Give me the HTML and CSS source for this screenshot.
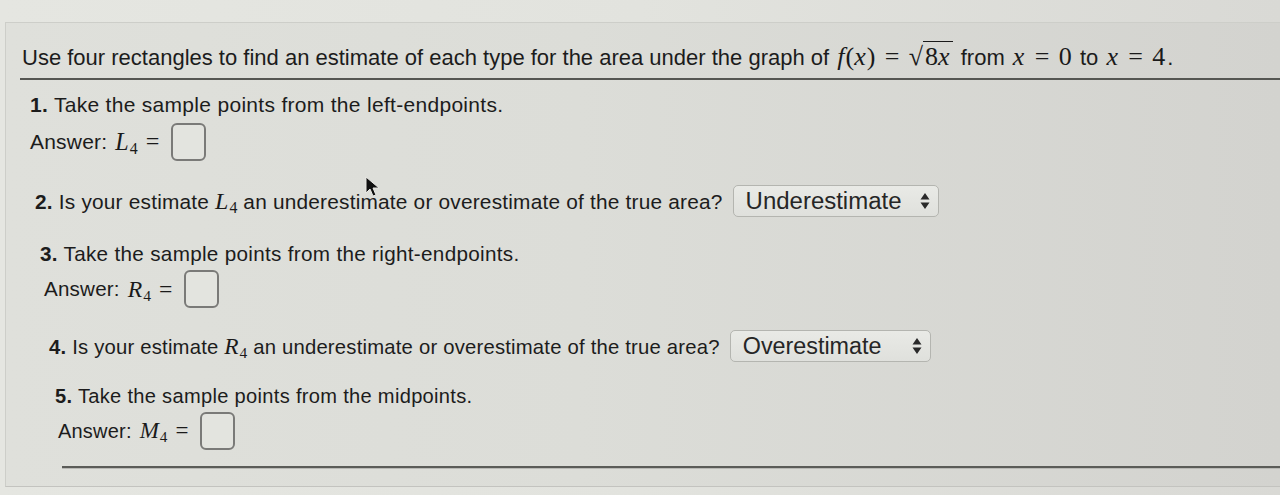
FILE: index.html
```html
<!DOCTYPE html>
<html>
<head>
<meta charset="utf-8">
<link rel="stylesheet" href="styles.css">
</head>
<body>
<div class="panel">
  <div class="header">
    <p class="intro">Use four rectangles to find an estimate of each type for the area under the graph of <span class="m"><i>f</i>(<i>x</i>)<span class="eq">=</span><span class="rad">√</span><span class="radicand">8<i>x</i></span></span> from <span class="m"><i>x</i><span class="eq">=</span>0</span> to <span class="m"><i>x</i><span class="eq">=</span>4</span>.</p>
  </div>
  <div class="body">
    <p class="q r1"><b>1.</b> Take the sample points from the left-endpoints.</p>
    <div class="ans r2">Answer: <span class="m"><i>L</i><sub>4</sub><span class="eq">=</span></span><span class="box"></span></div>
    <div class="sel-row r3"><span><b>2.</b> Is your estimate <span class="m"><i>L</i><sub>4</sub></span> an underestimate or overestimate of the true area?</span>
      <span class="select s1">Underestimate<svg class="arrows" width="10" height="18" viewBox="0 0 10 18"><path d="M5 1 L9.5 7.5 H0.5 Z M5 17 L9.5 10.5 H0.5 Z" fill="#2a2a2a"/></svg></span></div>
    <p class="q r4"><b>3.</b> Take the sample points from the right-endpoints.</p>
    <div class="ans r5">Answer: <span class="m"><i>R</i><sub>4</sub><span class="eq">=</span></span><span class="box"></span></div>
    <div class="sel-row r6"><span><b>4.</b> Is your estimate <span class="m"><i>R</i><sub>4</sub></span> an underestimate or overestimate of the true area?</span>
      <span class="select s2">Overestimate<svg class="arrows" width="10" height="18" viewBox="0 0 10 18"><path d="M5 1 L9.5 7.5 H0.5 Z M5 17 L9.5 10.5 H0.5 Z" fill="#2a2a2a"/></svg></span></div>
    <p class="q r7"><b>5.</b> Take the sample points from the midpoints.</p>
    <div class="ans r8">Answer: <span class="m"><i>M</i><sub>4</sub><span class="eq">=</span></span><span class="box"></span></div>
    <div class="endline"></div>
  </div>
</div>
<svg class="cursor" width="18" height="24" viewBox="0 0 18 24"><path d="M1 1 L1 17 L5 13 L8 20 L11 19 L8 12 L14 12 Z" fill="#111" stroke="#e8e8e4" stroke-width="1"/></svg>
</body>
</html>
```
FILE: styles.css
```css
html, body {
  margin: 0;
  padding: 0;
}
body {
  width: 1280px;
  height: 495px;
  overflow: hidden;
  background: linear-gradient(90deg, #e5e6e1 0%, #e2e3de 50%, #d9d9d5 100%);
  font-family: "Liberation Sans", Arial, sans-serif;
  color: #1c1c1c;
  position: relative;
}
.panel {
  margin: 22px 0 0 5px;
  height: 465px;
  border-top: 1px solid #cdcec9;
  border-left: 1px solid #cdcec9;
  border-bottom: 1px solid #c3c3bf;
  background: linear-gradient(90deg, #dfe0db 0%, #dcddd8 45%, #d3d3cf 100%);
  box-sizing: border-box;
}
.header {
  margin-left: 14px;
  padding-top: 21px;
  height: 57px;
  box-sizing: border-box;
  border-bottom: 2px solid #555652;
}
.intro {
  margin: 0 0 0 2px;
  font-size: 22px;
  line-height: 26px;
  white-space: nowrap;
}
.m {
  font-family: "Liberation Serif", "Times New Roman", serif;
  font-size: 1.15em;
  color: #1a1a1a;
}
.intro .m {
  font-size: 26px;
  margin: 0 2px;
}
.intro .eq { margin: 0 0.36em; }
.m i { font-style: italic; padding-right: 1px; }
.m sub {
  font-size: 0.66em;
  vertical-align: -4px;
  line-height: 0;
}
.eq {
  margin: 0 0.45em;
  font-style: normal;
}
.radicand {
  border-top: 1.5px solid #1a1a1a;
  padding: 0 2px 0 2px;
}
.body {
  display: flex;
  flex-direction: column;
  align-items: flex-start;
}
.q {
  margin: 0;
  letter-spacing: 0.3px;
  line-height: 24px;
  white-space: nowrap;
}
.q b, .sel-row b { font-weight: bold; }
.ans {
  display: flex;
  align-items: center;
  letter-spacing: 0.2px;
  height: 38px;
  white-space: nowrap;
}
.ans .m { margin-left: 8px; letter-spacing: 0; }
.ans .eq { margin: 0 12px 0 8px; }
.box {
  display: inline-block;
  width: 31px;
  height: 34px;
  border: 2px solid #7a7a78;
  border-radius: 6px;
  background: #e3e4df;
}
.sel-row {
  display: flex;
  align-items: center;
  letter-spacing: 0.2px;
  height: 32px;
  white-space: nowrap;
}
.sel-row .m { letter-spacing: 0; }
.select {
  display: inline-flex;
  align-items: center;
  justify-content: space-between;
  height: 32px;
  box-sizing: border-box;
  border: 1px solid #b4b5b0;
  border-radius: 5px;
  background: linear-gradient(180deg, #e9eae6, #dfe0dc);
  font-size: 1.15em;
  letter-spacing: 0;
  color: #262626;
  padding: 0 8px 0 12px;
  margin-left: 10px;
}
.s1 { width: 206px; }
.s2 { width: 201px; }
.arrows { flex: none; }
.r1 { margin: 13px 0 0 24px; font-size: 21px; }
.r2 { margin: 6px 0 0 24px; font-size: 21px; }
.r3 { margin: 24px 0 0 29px; font-size: 20.85px; }
.r4 { margin: 25px 0 0 34px; font-size: 20.7px; }
.r5 { margin: 4px 0 0 38px; font-size: 20.6px; }
.r6 { margin: 22px 0 0 43px; font-size: 20.3px; }
.r7 { margin: 22px 0 0 49px; font-size: 20.1px; }
.r8 { margin: 4px 0 0 52px; font-size: 20px; }
.endline {
  margin: 16px 0 0 56px;
  align-self: stretch;
  height: 2px;
  background: #5b5c58;
  border-bottom: 1px solid #b9b9b5;
}
.cursor {
  position: absolute;
  left: 365px;
  top: 176px;
}
```
